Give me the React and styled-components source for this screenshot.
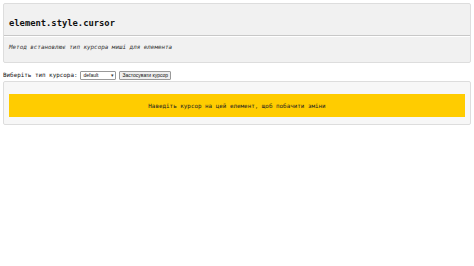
import { useState } from 'react';
import styled, { createGlobalStyle } from 'styled-components';

const GlobalStyle = createGlobalStyle`
  body {
    margin: 3px;
    font-family: "DejaVu Sans Mono", "Liberation Mono", monospace;
    background: #ffffff;
    color: #111111;
  }
`;

const Panel = styled.section`
  background: #f1f1f1;
  border: 1px solid #dddddd;
  border-radius: 2px;
  padding: 8px 5px 9px;
`;

const Title = styled.h1`
  margin: 5px 0 0;
  font-size: 8.8px;
  font-weight: bold;
  line-height: 12px;
`;

const Rule = styled.hr`
  margin: 6px -5px 0;
  border: none;
  border-top: 1px solid #c8c8c8;
  border-bottom: 1px solid #ffffff;
`;

const Description = styled.p`
  margin: 5px 0 0;
  padding-bottom: 1px;
  font-size: 5.9px;
  font-style: italic;
  line-height: 10px;
  color: #333333;
`;

const Controls = styled.div`
  display: flex;
  align-items: center;
  gap: 3px;
  margin-top: 8px;
  font-size: 5.9px;
  line-height: 9px;
`;

const SelectWrap = styled.span`
  position: relative;
  display: inline-flex;
`;

const Select = styled.select`
  appearance: none;
  width: 36px;
  height: 9px;
  padding: 0 2px;
  font-family: "Liberation Sans", Arial, sans-serif;
  font-size: 5px;
  line-height: 7px;
  border: 1px solid #999999;
  border-radius: 1px;
  background: #ffffff;
  color: #111111;
`;

const Arrow = styled.span`
  position: absolute;
  right: 3px;
  top: 1px;
  font-family: "DejaVu Sans", sans-serif;
  font-size: 5px;
  line-height: 7px;
  color: #333333;
  pointer-events: none;
`;

const Button = styled.button`
  height: 9px;
  padding: 0 2px;
  font-family: "Liberation Sans", Arial, sans-serif;
  font-size: 5px;
  line-height: 7px;
  border: 1px solid #999999;
  border-radius: 1px;
  background: #efefef;
  color: #111111;
`;

const Stage = styled.section`
  margin-top: 1px;
  background: #f7f7f7;
  border: 1px solid #dddddd;
  border-radius: 2px;
  padding: 12px 5px 7px;
`;

const Target = styled.div`
  display: flex;
  align-items: center;
  justify-content: center;
  height: 23px;
  background: #ffcc00;
  font-size: 5.9px;
  color: #222222;
  cursor: ${(props) => props.cursor};
`;

const CURSORS = ['default', 'pointer', 'crosshair', 'move', 'text', 'wait', 'help', 'not-allowed'];

const App = () => {
  const [choice, setChoice] = useState('default');
  const [cursor, setCursor] = useState('default');

  return (
    <>
      <GlobalStyle />
      <Panel>
        <Title>element.style.cursor</Title>
        <Rule />
        <Description>Метод встановлює тип курсора миші для елемента</Description>
      </Panel>
      <Controls>
        <label htmlFor="cursor-type">Виберіть тип курсора:</label>
        <SelectWrap>
          <Select id="cursor-type" value={choice} onChange={(e) => setChoice(e.target.value)}>
            {CURSORS.map((c) => (
              <option key={c} value={c}>
                {c}
              </option>
            ))}
          </Select>
          <Arrow>▾</Arrow>
        </SelectWrap>
        <Button onClick={() => setCursor(choice)}>Застосувати курсор</Button>
      </Controls>
      <Stage>
        <Target cursor={cursor}>Наведіть курсор на цей елемент, щоб побачити зміни</Target>
      </Stage>
    </>
  );
};

export default App;
